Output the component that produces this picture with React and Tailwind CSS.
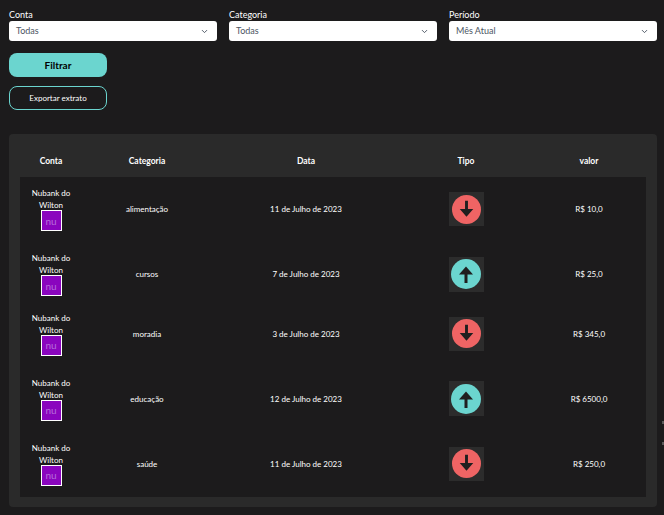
import { ChevronDown } from 'lucide-react';

const colunas = 'grid grid-cols-[62px_130px_188px_132px_114px]';

const rows = [
  { cat: 'alimentação', date: '11 de Julho de 2023', tipo: 'saida', valor: 'R$ 10,0', h: 'h-[64px]' },
  { cat: 'cursos', date: '7 de Julho de 2023', tipo: 'entrada', valor: 'R$ 25,0', h: 'h-[60px] pt-[6px]' },
  { cat: 'moradia', date: '3 de Julho de 2023', tipo: 'saida', valor: 'R$ 345,0', h: 'h-[65px]' },
  { cat: 'educação', date: '12 de Julho de 2023', tipo: 'entrada', valor: 'R$ 6500,0', h: 'h-[65px]' },
  { cat: 'saúde', date: '11 de Julho de 2023', tipo: 'saida', valor: 'R$ 250,0', h: 'h-[65px]' },
];

function Filtro({ label, value }) {
  return (
    <div className="flex-1">
      <p className="text-[9px] leading-[12px] text-white">{label}</p>
      <div className="h-5 bg-white rounded-[3px] flex items-center justify-between pl-[7px] pr-[8px]">
        <span className="text-[9px] text-[#4b5563]">{value}</span>
        <ChevronDown size={9} strokeWidth={2.5} className="text-[#4b5563]" />
      </div>
    </div>
  );
}

function Seta({ tipo }) {
  const entrada = tipo === 'entrada';
  return (
    <div className={`w-[35px] bg-[#2c2c2c] flex items-center justify-center mx-auto ${entrada ? 'h-[35px]' : 'h-[34px]'}`}>
      <svg viewBox="0 0 30 30" className={entrada ? 'w-[30px] h-[30px]' : 'w-[29px] h-[29px]'}>
        <circle cx="15" cy="15" r="15" fill={entrada ? '#6bd5cf' : '#ef6464'} />
        {entrada ? (
          <path d="M13.5 24V15.5H8L15 7.5l7 8h-5.5V24z" fill="#1f1f1f" />
        ) : (
          <path d="M13.5 6v8.5H8L15 22.5l7-8h-5.5V6z" fill="#1f1f1f" />
        )}
      </svg>
    </div>
  );
}

function Nubank() {
  return (
    <div className="w-[21px] h-[21px] -mt-px mx-auto border border-white bg-[#8a05be] flex items-center justify-center">
      <span className="text-[10px] leading-none text-[#b76ddb]">nu</span>
    </div>
  );
}

export default function App() {
  return (
    <div className="relative overflow-hidden min-h-[515px] bg-[#1c1b1c] text-white pl-[9px] pr-[7px] pt-[9px] font-['Lato','Noto_Sans',sans-serif]">
      <div className="flex gap-3">
        <Filtro label="Conta" value="Todas" />
        <Filtro label="Categoria" value="Todas" />
        <Filtro label="Período" value="Mês Atual" />
      </div>

      <button className="block mt-3 w-[98px] h-6 rounded-lg bg-[#6bd5cf] text-black text-[10px] font-bold">Filtrar</button>
      <button className="block mt-[9px] w-[98px] h-6 rounded-lg border border-[#6bd5cf] text-white text-[8px]">Exportar extrato</button>

      <div className="mt-6 h-[373px] bg-[#2a2a2a] rounded-sm px-[11px]">
        <div className={`${colunas} h-[43px] pt-[21px] text-[8.5px] leading-[12px] font-bold text-center`}>
          <span>Conta</span>
          <span>Categoria</span>
          <span>Data</span>
          <span>Tipo</span>
          <span>valor</span>
        </div>
        <div className="bg-[#1c1b1c] h-[320px] overflow-hidden">
          {rows.map((r) => (
            <div key={r.date + r.cat} className={`${colunas} items-center text-center text-[8px] ${r.h}`}>
              <div className="leading-[12px]">
                <p className="w-[50px] mx-auto">Nubank do Wilton</p>
                <Nubank />
              </div>
              <span>{r.cat}</span>
              <span>{r.date}</span>
              <Seta tipo={r.tipo} />
              <span>{r.valor}</span>
            </div>
          ))}
        </div>
      </div>

      {/* restos cortados na borda direita */}
      <div className="absolute left-[662px] top-[421px] w-[2px] h-[3px] bg-[#5a5a5a]" />
      <div className="absolute left-[662px] top-[442px] w-[2px] h-[3px] bg-[#5a5a5a]" />
    </div>
  );
}
